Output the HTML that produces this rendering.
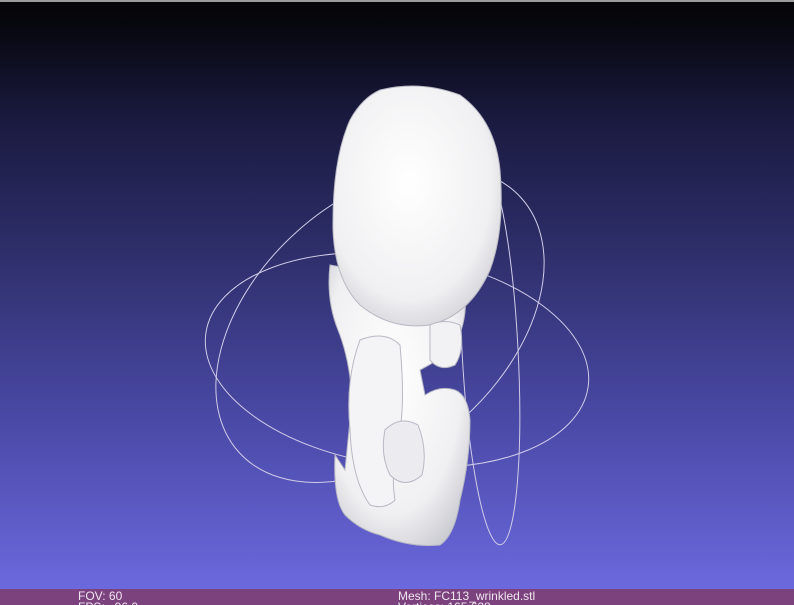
<!DOCTYPE html>
<html><head><style>
html,body{margin:0;padding:0;width:794px;height:605px;overflow:hidden}
body{background:linear-gradient(#050509 0px,#06060c 20px,#1a1a40 120px,#2e2e6a 250px,#4a49a6 420px,#6b69dd 588px);position:relative;font-family:"Liberation Sans",sans-serif}
.top{position:absolute;left:0;top:0;width:794px;height:2px;background:#9a9a9a}
.bar{position:absolute;left:0;top:589px;width:794px;height:16px;background:#7b427e;color:#f0e6f0;font-size:12px;overflow:hidden}
.bar span{position:absolute;line-height:12px}
svg{position:absolute;left:0;top:0}
</style></head><body>
<div class="top"></div>
<svg width="794" height="589" viewBox="0 0 794 589">
<defs>
<radialGradient id="g" cx="0.45" cy="0.4" r="0.7"><stop offset="0" stop-color="#ffffff"/><stop offset="0.7" stop-color="#f0f0f2"/><stop offset="1" stop-color="#c8c8d0"/></radialGradient>
</defs>
<g fill="none" stroke="#d0cce8" stroke-width="1">
<ellipse cx="397" cy="360" rx="193" ry="105" transform="rotate(8 397 360)"/>
<ellipse cx="380" cy="325" rx="190" ry="125" transform="rotate(-42 380 325)"/>
<ellipse cx="490" cy="350" rx="28" ry="195" transform="rotate(-3 490 350)"/>
</g>
<g fill="url(#g)" stroke="#b8b8c4" stroke-width="1">
<path d="M330 265 Q326 300 338 330 Q350 360 352 400 L345 470 L335 455 Q333 500 345 515 Q360 530 380 535 Q410 548 440 545 Q455 535 460 500 Q470 460 470 420 Q468 395 455 390 Q440 385 425 395 L420 370 Q440 360 455 345 Q468 320 465 290 Z"/>
<path d="M380 90 Q420 80 460 95 Q495 120 500 170 Q505 230 490 270 Q470 315 430 325 Q390 330 360 305 Q335 280 333 230 Q332 160 350 120 Q362 98 380 90 Z"/>
<path d="M360 340 Q385 330 400 345 Q405 400 400 430 Q390 470 395 500 Q385 510 370 505 Q352 480 350 430 Q345 380 360 340 Z" fill="#f4f4f6"/>
<path d="M430 325 Q445 318 460 325 Q465 350 455 365 Q440 372 430 360 Z" fill="#f2f2f4"/>
<path d="M385 430 Q400 415 418 425 Q428 450 422 475 Q405 490 390 475 Q380 455 385 430 Z" fill="#ececf0"/>
</g>
</svg>
<div class="bar"><span style="left:78px;top:1px">FOV: 60</span><span style="left:78px;top:12px">FPS:&nbsp;&nbsp;&nbsp;96.0</span><span style="left:398px;top:1px">Mesh: FC113_wrinkled.stl</span><span style="left:398px;top:12px">Vertices: 165,628</span></div>
</body></html>
